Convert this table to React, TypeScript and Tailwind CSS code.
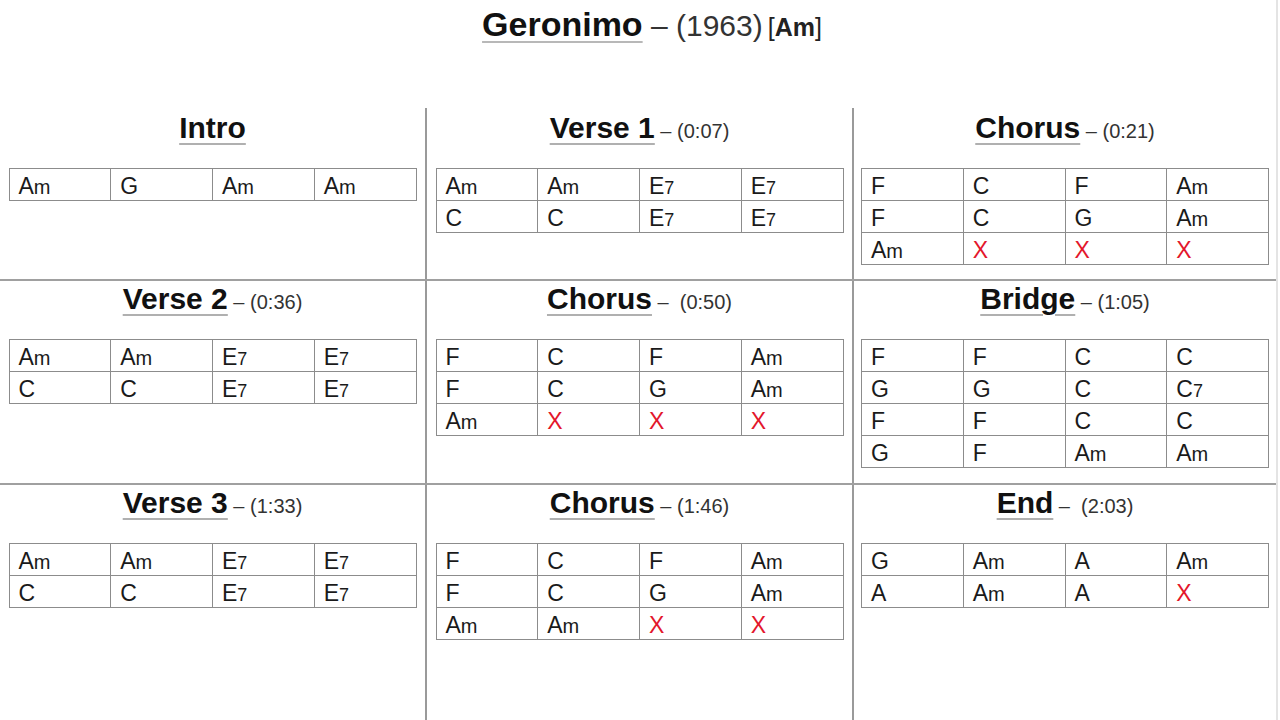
import React from "react";

type Section = { title: string; time: string; rows: string[][] };

const chorus = [
  ["F", "C", "F", "Am"],
  ["F", "C", "G", "Am"],
  ["Am", "X", "X", "X"],
];

const grid: Section[][] = [
  [
    { title: "Intro", time: "", rows: [["Am", "G", "Am", "Am"]] },
    { title: "Verse 1", time: " – (0:07)", rows: [["Am", "Am", "E7", "E7"], ["C", "C", "E7", "E7"]] },
    { title: "Chorus", time: " – (0:21)", rows: chorus },
  ],
  [
    { title: "Verse 2", time: " – (0:36)", rows: [["Am", "Am", "E7", "E7"], ["C", "C", "E7", "E7"]] },
    { title: "Chorus", time: " –  (0:50)", rows: chorus },
    {
      title: "Bridge",
      time: " – (1:05)",
      rows: [
        ["F", "F", "C", "C"],
        ["G", "G", "C", "C7"],
        ["F", "F", "C", "C"],
        ["G", "F", "Am", "Am"],
      ],
    },
  ],
  [
    { title: "Verse 3", time: " – (1:33)", rows: [["Am", "Am", "E7", "E7"], ["C", "C", "E7", "E7"]] },
    {
      title: "Chorus",
      time: " – (1:46)",
      rows: [
        ["F", "C", "F", "Am"],
        ["F", "C", "G", "Am"],
        ["Am", "Am", "X", "X"],
      ],
    },
    { title: "End", time: " –  (2:03)", rows: [["G", "Am", "A", "Am"], ["A", "Am", "A", "X"]] },
  ],
];

function Chord({ c }: { c: string }) {
  if (c === "X") return <span className="text-[#e3162b]">X</span>;
  if (c.length === 2 && c[1] === "m")
    return (
      <span>
        {c[0]}
        <span className="text-[20px]">m</span>
      </span>
    );
  if (c.length === 2 && c[1] === "7")
    return (
      <span>
        {c[0]}
        <span className="text-[18px]">7</span>
      </span>
    );
  return <span>{c}</span>;
}

function Block({ s, first }: { s: Section; first: boolean }) {
  return (
    <div className={`flex flex-col items-center ${first ? "pt-[2px]" : "pt-0"}`}>
      <div className="h-[36px] leading-[36px] whitespace-pre">
        <span className="text-[30px] font-bold text-[#111] underline decoration-[#b0b0b0] decoration-[2px] underline-offset-[5px]">
          {s.title}
        </span>
        <span className="text-[20px] text-[#333]">{s.time}</span>
      </div>
      <div className="mt-[22px] w-[408px] grid grid-cols-4 border-l border-t border-[#8c8c8c]">
        {s.rows.flat().map((c, i) => (
          <div
            key={i}
            className="h-[32px] border-r border-b border-[#8c8c8c] pl-[9px] pt-[3px] leading-[29px] text-[23px] text-[#1a1a1a]"
          >
            <Chord c={c} />
          </div>
        ))}
      </div>
    </div>
  );
}

export default function App() {
  const heights = ["h-[171px]", "h-[204px]", "h-[237px]"];
  return (
    <div
      className="w-[1280px] h-[720px] bg-white overflow-hidden flex"
      style={{ fontFamily: '"Liberation Sans", Arial, sans-serif' }}
    >
      <div className="w-[1278px] h-full border-r-2 border-[#e4e4e4] flex flex-col">
        <div className="h-[108px] flex justify-center pl-[28px] pt-[4px]">
          <div className="h-[40px] leading-[40px] whitespace-pre flex items-baseline">
            <span className="text-[34px] font-bold text-[#111] underline decoration-[#b8b8b8] decoration-[2px] underline-offset-[5px]">
              Geronimo
            </span>
            <span className="text-[30px] text-[#333]"> – (1963)</span>
            <span className="text-[25px] text-[#222] ml-[5px]">
              [<span className="font-bold">Am</span>]
            </span>
          </div>
        </div>
        {grid.map((row, r) => (
          <div
            key={r}
            className={`${heights[r]} flex ${r > 0 ? "border-t-2 border-[#a0a0a0]" : ""}`}
          >
            {row.map((s, c) => (
              <div
                key={c}
                className={`${c < 2 ? "w-[427px] border-r-2 border-[#9a9a9a]" : "flex-1"}`}
              >
                <Block s={s} first={r === 0} />
              </div>
            ))}
          </div>
        ))}
      </div>
    </div>
  );
}
